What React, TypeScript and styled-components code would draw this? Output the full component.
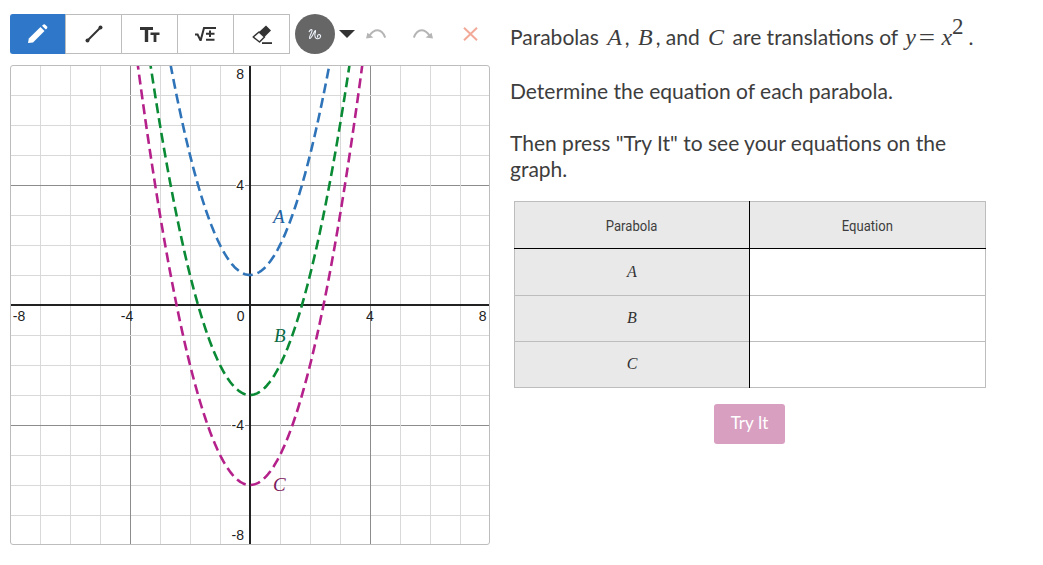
import React from "react";
import styled, { createGlobalStyle } from "styled-components";

const GlobalStyle = createGlobalStyle`
  html, body {
    margin: 0;
    padding: 0;
    background: #fff;
  }
  body {
    font-family: Lato, "Open Sans", sans-serif;
    color: #3d3d3d;
  }
`;

const Page = styled.div`
  display: flex;
  gap: 20px;
  padding: 14px 0 0 10px;
  width: 1033px;
  box-sizing: border-box;
`;

const LeftColumn = styled.div`
  display: flex;
  flex-direction: column;
  gap: 11px;
  width: 480px;
  flex: none;
`;

const Toolbar = styled.div`
  display: flex;
  align-items: center;
  height: 40px;
`;

const ToolGroup = styled.div`
  display: flex;
  height: 40px;
  width: 280px;
`;

const ToolButton = styled.button<{ $active?: boolean }>`
  width: 56px;
  height: 40px;
  padding: 0;
  margin: 0;
  display: flex;
  align-items: center;
  justify-content: center;
  box-sizing: border-box;
  background: ${(p) => (p.$active ? "#2f78c9" : "#fff")};
  border: 1px solid ${(p) => (p.$active ? "#2f78c9" : "#bdbdbd")};
  border-left-width: ${(p) => (p.$active ? "1px" : "0")};
  border-right-color: #bdbdbd;
  border-radius: ${(p) => (p.$active ? "3px 0 0 3px" : "0")};
`;

const ColorCircle = styled.div`
  width: 40px;
  height: 40px;
  margin-left: 5px;
  border-radius: 50%;
  background: #666;
  display: flex;
  align-items: center;
  justify-content: center;
`;

const Caret = styled.div`
  width: 0;
  height: 0;
  margin: 0 0 0 4px;
  border-left: 8px solid transparent;
  border-right: 8px solid transparent;
  border-top: 8px solid #333;
`;

const HistoryIcons = styled.div`
  display: flex;
  align-items: center;
  margin-left: 11px;
  gap: 27px;
`;

const CloseSlot = styled.div`
  display: flex;
  margin-left: 3px;
`;

const GraphBox = styled.div`
  width: 480px;
  height: 480px;
  box-sizing: border-box;
  border: 1px solid #bdbdbd;
  border-radius: 3px;
  overflow: hidden;
`;

const GraphSvg = styled.svg`
  display: block;
  margin: -1px;
`;

const RightColumn = styled.div`
  width: 479px;
  flex: none;
  display: flex;
  flex-direction: column;
  padding-top: 10px;
`;

const Paragraph = styled.p`
  margin: 0 0 26px;
  font-size: 21px;
  line-height: 26px;
  color: #3d3d3d;
`;

const IntroParagraph = styled(Paragraph)`
  margin-bottom: 28px;
  height: 26px;
  white-space: nowrap;
`;

const MathVar = styled.span`
  font-family: "Liberation Serif", serif;
  font-style: italic;
  font-size: 24px;
  margin: 0 3px 0 3px;
`;

const MathY = styled(MathVar)`
  margin: 0 0 0 2px;
`;

const MathX = styled(MathVar)`
  margin: 0;
`;

const MathEquals = styled.span`
  font-family: "Liberation Serif", serif;
  font-size: 24px;
  margin: 0 8px 0 4px;
  display: inline-block;
  transform: scaleX(1.2);
`;

const Sup = styled.span`
  font-family: "Liberation Serif", serif;
  font-size: 23px;
  position: relative;
  top: -11px;
  margin-right: 5px;
`;

const EquationTable = styled.table`
  width: 472px;
  margin: -7px 0 0 4px;
  border-collapse: collapse;
  table-layout: fixed;
  border: 1px solid #bdbdbd;
`;

const HeadCell = styled.th<{ $first?: boolean }>`
  height: 45px;
  padding: 1px 0 0;
  width: ${(p) => (p.$first ? "234px" : "auto")};
  background: #e9e9e9;
  font-family: Roboto, sans-serif;
  font-size: 15px;
  font-weight: 400;
  color: #3d3d3d;
  border-bottom: 1px solid #000;
  border-right: ${(p) => (p.$first ? "1px solid #000" : "none")};
`;

const HeadLabel = styled.span`
  display: inline-block;
  transform: scaleX(0.87);
`;

const RowLabel = styled.td`
  height: 43px;
  padding: 0 0 2px;
  background: #e9e9e9;
  text-align: center;
  font-family: "Liberation Serif", serif;
  font-style: italic;
  font-size: 16px;
  color: #333;
  border-top: 1px solid #bdbdbd;
  border-right: 1px solid #000;

  tr:first-child > & {
    height: 46px;
    padding: 0;
  }
`;

const AnswerCell = styled.td`
  background: #fff;
  padding: 0;
  border-top: 1px solid #bdbdbd;
`;

const TryRow = styled.div`
  display: flex;
  justify-content: center;
  margin-top: 16px;
`;

const TryButton = styled.button`
  width: 71px;
  height: 40px;
  border: none;
  border-radius: 3px;
  background: #d89fc1;
  color: #fff;
  font-family: Lato, sans-serif;
  font-size: 17px;
  padding: 0 0 3px;
`;

const size = 480;
const unit = 30;
const originX = 240;
const originY = 240;
const dashPeriod = 15;

const px = (x: number) => originX + x * unit;
const py = (y: number) => originY - y * unit;

const parabola = (k: number) => {
  const limit = Math.sqrt(8.2 - k);
  const pts: string[] = [];
  for (let x = -limit; x <= limit + 0.001; x += 0.04) {
    pts.push(`${px(x).toFixed(1)},${py(x * x + k).toFixed(1)}`);
  }
  return pts.join(" ");
};

// arc length from the vertex to x, in pixels
const arcFromVertex = (x: number) => {
  const a = Math.abs(x);
  const s = (a * Math.sqrt(1 + 4 * a * a)) / 2 + Math.asinh(2 * a) / 4;
  return Math.sign(x) * s * unit;
};

// offset that puts the start of a dash at x = dashAt
const dashOffset = (k: number, dashAt: number) => {
  const limit = Math.sqrt(8.2 - k);
  const length = arcFromVertex(dashAt) + arcFromVertex(limit);
  return dashPeriod - (length % dashPeriod);
};

const curves = [
  { k: 1, color: "#2f74b8", dashAt: -0.233 },
  { k: -3, color: "#0a8a35", dashAt: 0.02 },
  { k: -6, color: "#b5218a", dashAt: 0.02 },
];

const steps = Array.from({ length: 17 }, (_, i) => i - 8);

const xTicks = [
  { label: "-8", x: 9 },
  { label: "-4", x: 117 },
  { label: "0", x: 230.7 },
  { label: "4", x: 360 },
  { label: "8", x: 472.7 },
];

const yTicks = [
  { label: "8", y: 14 },
  { label: "4", y: 125 },
  { label: "-4", y: 365 },
  { label: "-8", y: 474.5 },
];

const Graph = () => (
  <GraphSvg width={size} height={size} viewBox={`0 0 ${size} ${size}`}>
    {steps.map((n) => {
      if (n === 0 || Math.abs(n) % 8 === 0) return null;
      const major = Math.abs(n) === 4;
      const stroke = major ? "#8c8c8c" : "#d9d9d9";
      return (
        <g key={n} stroke={stroke} strokeWidth="1">
          <line x1={px(n) + 0.5} y1="0" x2={px(n) + 0.5} y2={size} />
          <line x1="0" y1={py(n) + 0.5} x2={size} y2={py(n) + 0.5} />
        </g>
      );
    })}
    <line x1={px(0)} y1="0" x2={px(0)} y2={size} stroke="#222" strokeWidth="2" />
    <line x1="0" y1={py(0)} x2={size} y2={py(0)} stroke="#222" strokeWidth="2" />
    <rect x={226} y={113} width={9} height={15} fill="#fff" />
    <rect x={221} y={353} width={14} height={15} fill="#fff" />
    {curves.map((c) => (
      <polyline
        key={c.k}
        points={parabola(c.k)}
        fill="none"
        stroke={c.color}
        strokeWidth="2.6"
        strokeDasharray="10 5"
        strokeDashoffset={dashOffset(c.k, c.dashAt)}
      />
    ))}
    <g fontFamily="'Liberation Sans', sans-serif" fontSize="14" fill="#222">
      {xTicks.map((t) => (
        <text key={t.label} x={t.x} y={256} textAnchor="middle">
          {t.label}
        </text>
      ))}
      {yTicks.map((t) => (
        <text key={t.label} x={234} y={t.y} textAnchor="end">
          {t.label}
        </text>
      ))}
    </g>
    <g fontFamily="'Liberation Serif', serif" fontStyle="italic" fontSize="19">
      <text x={263} y={157.7} fill="#1f5f9e">A</text>
      <text x={264} y={277} fill="#0a6a45">B</text>
      <text x={263} y={426} fill="#7c1a5c">C</text>
    </g>
  </GraphSvg>
);

const PencilIcon = () => (
  <svg width="20" height="20" viewBox="0 0 20 20">
    <path d="M0 19 L0.8 14.5 L12.5 3 L16.5 7 L5 18.4 Z" fill="#fff" />
    <path d="M14 1.8 L15.5 0.6 Q16.5 0 17.5 0.9 L19 2.4 Q19.8 3.4 19 4.4 L17.8 5.6 Z" fill="#fff" />
  </svg>
);

const LineIcon = () => (
  <svg width="20" height="20" viewBox="0 0 20 20">
    <line x1="3.5" y1="16.5" x2="16.5" y2="3.5" stroke="#333" strokeWidth="1.9" />
    <circle cx="3.5" cy="16.5" r="2" fill="#333" />
    <circle cx="16.5" cy="3.5" r="2" fill="#333" />
  </svg>
);

const TextIcon = () => (
  <svg width="20" height="15" viewBox="0 0 20 15">
    <path d="M0 0 H13 V3 H8.2 V15 H4.8 V3 H0 Z" fill="#333" />
    <path d="M10.5 5.5 H19.5 V8 H16.4 V15 H13.6 V8 H10.5 Z" fill="#333" />
  </svg>
);

const MathIcon = () => (
  <svg width="21" height="14" viewBox="0 0 21 14">
    <path d="M0 7.5 H2.6 L5.6 13.6 L9 1 H21" fill="none" stroke="#333" strokeWidth="2" />
    <path d="M15 3.5 V10 M11 6.7 H19.5 M11 12.8 H19.5" fill="none" stroke="#333" strokeWidth="2" />
  </svg>
);

const EraserIcon = () => (
  <svg width="20" height="20" viewBox="0 0 20 20">
    <path d="M7 8 L14 1.5 L19 6.5 L12.5 13 Z" fill="#333" />
    <path d="M7 8 L12.5 13 L7.5 18 L1.2 13 Z" fill="#fff" stroke="#333" strokeWidth="1.5" strokeLinejoin="round" />
    <rect x="10" y="18.2" width="10" height="1.8" fill="#333" />
  </svg>
);

const InkIcon = () => (
  <svg width="14" height="12" viewBox="0 0 14 12">
    <path
      d="M1 4 C2 1.5 4.5 0.5 4 3 C3.5 6 0.5 9.5 1.5 10.5 C3 11 5 6.5 6.5 3.5 C7.5 1.5 8 3 7 5.5 C6.2 8 7.5 11 10 10.8 C13 10.5 13.5 7 11 6.5 C9.5 6.5 9 8.5 10 9.5"
      fill="none"
      stroke="#eef3fb"
      strokeWidth="1.1"
    />
  </svg>
);

const ArcArrow = styled.svg<{ $flip?: boolean }>`
  transform: ${(p) => (p.$flip ? "scaleX(-1)" : "none")};
`;

const UndoIcon = ({ flip }: { flip?: boolean }) => (
  <ArcArrow $flip={flip} width="20" height="10" viewBox="0 0 20 10">
    <path d="M3.5 6.5 Q7 1.2 11.5 1.2 Q16.5 1.2 19.2 8.6" fill="none" stroke="#b5b5b5" strokeWidth="2" />
    <path d="M0 9.4 L1.4 3.8 L7.4 8.6 Z" fill="#b5b5b5" />
  </ArcArrow>
);

const CloseIcon = () => (
  <svg width="15" height="14" viewBox="0 0 15 14">
    <path d="M1 0.8 L14 13.2 M14 0.8 L1 13.2" stroke="#f3a997" strokeWidth="2" />
  </svg>
);

const rows = ["A", "B", "C"];

const App: React.FC = () => (
  <>
    <GlobalStyle />
    <Page>
      <LeftColumn>
        <Toolbar>
          <ToolGroup>
            <ToolButton $active><PencilIcon /></ToolButton>
            <ToolButton><LineIcon /></ToolButton>
            <ToolButton><TextIcon /></ToolButton>
            <ToolButton><MathIcon /></ToolButton>
            <ToolButton><EraserIcon /></ToolButton>
          </ToolGroup>
          <ColorCircle><InkIcon /></ColorCircle>
          <Caret />
          <HistoryIcons>
            <UndoIcon />
            <UndoIcon flip />
            <CloseSlot><CloseIcon /></CloseSlot>
          </HistoryIcons>
        </Toolbar>
        <GraphBox>
          <Graph />
        </GraphBox>
      </LeftColumn>
      <RightColumn>
        <IntroParagraph>
          Parabolas <MathVar>A</MathVar>, <MathVar>B</MathVar>, and <MathVar>C</MathVar> are translations of{" "}
          <MathY>y</MathY>
          <MathEquals>=</MathEquals>
          <MathX>x</MathX>
          <Sup>2</Sup>.
        </IntroParagraph>
        <Paragraph>Determine the equation of each parabola.</Paragraph>
        <Paragraph>
          Then press "Try It" to see your equations on the graph.
        </Paragraph>
        <EquationTable>
          <thead>
            <tr>
              <HeadCell $first><HeadLabel>Parabola</HeadLabel></HeadCell>
              <HeadCell><HeadLabel>Equation</HeadLabel></HeadCell>
            </tr>
          </thead>
          <tbody>
            {rows.map((r) => (
              <tr key={r}>
                <RowLabel>{r}</RowLabel>
                <AnswerCell />
              </tr>
            ))}
          </tbody>
        </EquationTable>
        <TryRow>
          <TryButton>Try It</TryButton>
        </TryRow>
      </RightColumn>
    </Page>
  </>
);

export default App;
